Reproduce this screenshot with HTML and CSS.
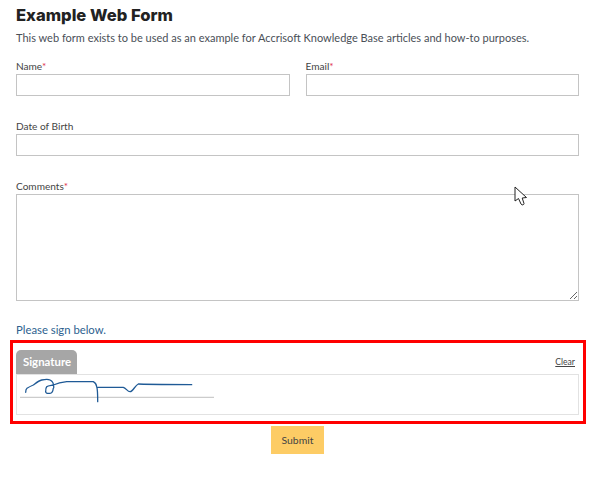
FILE: index.html
```html
<!DOCTYPE html>
<html lang="en">
<head>
    <meta charset="UTF-8">
    <title>Example Web Form</title>
    <link rel="stylesheet" href="styles.css">
</head>
<body>
    <form class="web-form">
        <h1>Example Web Form</h1>
        <p class="intro">This web form exists to be used as an example for Accrisoft Knowledge Base articles and how-to purposes.</p>

        <div class="row row-name">
            <div class="field">
                <label>Name<span class="req">*</span></label>
                <input type="text">
            </div>
            <div class="field">
                <label>Email<span class="req">*</span></label>
                <input type="text">
            </div>
        </div>

        <div class="row row-dob">
            <div class="field">
                <label>Date of Birth</label>
                <input type="text">
            </div>
        </div>

        <div class="row row-comments">
            <div class="field">
                <label>Comments<span class="req">*</span></label>
                <textarea></textarea>
            </div>
        </div>

        <p class="sign-note">Please sign below.</p>

        <!-- Red box marks the signature field -->
        <div class="highlight">
            <div class="sig-head">
                <span class="sig-tab">Signature</span>
                <a class="sig-clear" href="#">Clear</a>
            </div>
            <div class="sig-pad">
                <svg class="sig-drawing" width="200" height="32" viewBox="0 0 200 32">
                    <line x1="3" y1="22.3" x2="197" y2="22.3" stroke="#cccccc" stroke-width="1.2"/>
                    <path d="M8.7 17.3 C8.7 15 9 14 10 13.3 C12 12 14 11 16.3 10 C19 8 22 5.5 24.7 5 C28 4.4 31 4 33 5 C35 6 36.5 8 36.3 10 C37 12 37 13 36.3 13.3 C36 16 35 18.3 33 18.3 C30 18.8 28.5 18 28.7 16.7 C28.5 14 29 12.5 29.7 11.7 C31 10.5 34 10.5 36.3 10 C40 8.5 45 7.3 49.7 6.7 C58 6.3 68 6.7 76.3 6.7 C78 7.5 79.3 9.5 79.7 11.7 C80.6 14 80.7 20 80.7 26.7 M80.7 12.3 C88 12.2 98 12.4 106.3 12.3 C109 13 110.5 16.7 113 16.7 C116 16.5 118 10.5 121.3 9 C126 9.3 150 9.5 174.7 9.7"
                        fill="none" stroke="#1f5a96" stroke-width="1.3" stroke-linecap="round" stroke-linejoin="round"/>
                </svg>
            </div>
        </div>

        <div class="actions">
            <button type="button" class="submit">Submit</button>
        </div>
    </form>

    <!-- Mouse pointer caught in the screenshot -->
    <svg class="pointer" width="14" height="21" viewBox="0 0 14 21">
        <path d="M1 1 L1 15 L4.5 12.5 L7 18 C8 19.5 10 19 10 17.5 L8.2 12 L12.5 11.5 Z" fill="#ffffff" stroke="#222222" stroke-width="1"/>
    </svg>
</body>
</html>
```

FILE: styles.css
```css
body {
    font-family: Lato, "Open Sans", Arial, sans-serif;
    background-color: white;
    color: #444;
    margin: 0;
    padding: 0;
}

.web-form {
    padding: 0 16px;
}

h1 {
    font-family: Inter, "Open Sans", sans-serif;
    font-size: 16.6px;
    font-weight: 800;
    line-height: 20px;
    color: #222;
    margin: 0;
    padding-top: 5px;
}

.intro {
    font-size: 11px;
    line-height: 16px;
    color: #4a4f57;
    margin: 5px 0 0;
}

.row {
    display: flex;
    gap: 16px;
}

.row-name {
    margin-top: 14px;
}

.row-dob {
    margin-top: 24px;
}

.row-comments {
    margin-top: 24px;
}

.field {
    flex: 1;
    display: flex;
    flex-direction: column;
}

label {
    font-size: 10.1px;
    line-height: 12px;
    height: 14px;
    color: #444;
}

.req {
    color: #e0304a;
}

input, textarea {
    display: block;
    width: 100%;
    box-sizing: border-box;
    border: 1px solid #c4c4c4;
    background-color: white;
    margin: 0;
    padding: 0;
}

input {
    height: 22px;
}

textarea {
    height: 107px;
    resize: both;
}

.sign-note {
    font-size: 11.3px;
    line-height: 14px;
    color: #2d5f8f;
    margin: 22px 0 0;
}

.highlight {
    border: 3px solid #ff0000;
    margin: 3px -7px 0 -6px;
    padding: 7px 4px 6px 3px;
}

.sig-head {
    display: flex;
    justify-content: space-between;
    align-items: flex-end;
    height: 24px;
}

.sig-tab {
    background-color: #a6a6a6;
    color: white;
    font-size: 11.4px;
    font-weight: 700;
    line-height: 24px;
    padding: 0 6px 0 7px;
    width: 48px;
    border-radius: 5px 5px 0 0;
}

.sig-clear {
    font-size: 8.6px;
    line-height: 10px;
    color: #444;
    margin: 0 4px 7px 0;
}

.sig-pad {
    border: 1px solid #e2e2e2;
    height: 39px;
}

.sig-drawing {
    display: block;
}

.actions {
    display: flex;
    justify-content: center;
    margin-top: 2px;
}

.submit {
    background-color: #fdcc65;
    color: #444;
    font-family: Lato, "Open Sans", Arial, sans-serif;
    font-size: 10.4px;
    border: none;
    width: 53px;
    height: 28px;
    padding: 0;
}

.pointer {
    position: absolute;
    left: 514px;
    top: 186px;
}
```
